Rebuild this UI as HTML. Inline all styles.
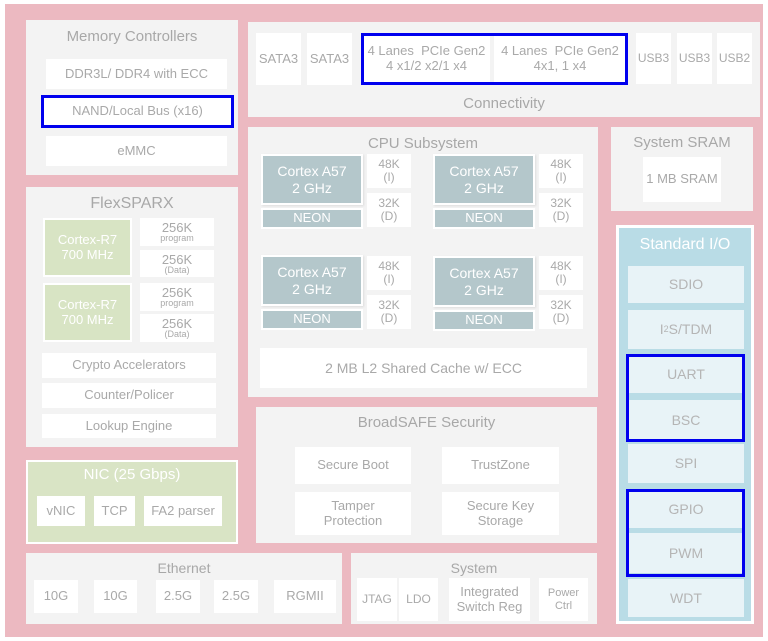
<!DOCTYPE html>
<html><head><meta charset="utf-8"><style>
*{margin:0;padding:0;box-sizing:border-box}
body{width:768px;height:641px;background:#fff;position:relative;overflow:hidden;font-family:"Liberation Sans",sans-serif;color:#a9a9a9}
.a{position:absolute;display:flex;align-items:center;justify-content:center;text-align:center;line-height:1.15}
.p{position:absolute;background:#f3f3f3}
.w{background:#fff}
.t{position:absolute;text-align:center;font-size:15px;color:#a8a8a8}
.c{background:#b4c7cb;color:#fff;font-size:14px;border:2px solid #fff;box-shadow:1px 1px 2px #ddd}
.n{background:#b4c7cb;color:#fff;font-size:13px;border:2px solid #fff}
.k{font-size:12px;line-height:1.1}
.g{background:#d8e4c4;color:#fff;font-size:13px;border:2px solid #fff}
.s{font-size:13px}
.io{background:#e8f3f7;font-size:14px;color:#b5b5b5}
.bl{position:absolute;border:3px solid #0000ee}
.nar{font-size:13px;transform:scaleX(.88)}
</style></head><body>
<div style="position:absolute;left:5px;top:4px;width:758px;height:633px;background:#ecb9c1"></div>

<!-- Memory Controllers -->
<div class="p" style="left:26px;top:20px;width:212px;height:155px"></div>
<div class="t" style="left:26px;top:28px;width:212px">Memory Controllers</div>
<div class="a w s" style="left:46px;top:59px;width:181px;height:30px">DDR3L/ DDR4 with ECC</div>
<div class="a w s" style="left:41px;top:95px;width:193px;height:33px">NAND/Local Bus (x16)</div>
<div class="bl" style="left:41px;top:95px;width:193px;height:33px"></div>
<div class="a w s" style="left:46px;top:136px;width:181px;height:30px">eMMC</div>

<!-- Connectivity -->
<div class="p" style="left:248px;top:22px;width:512px;height:95px"></div>
<div class="a w s" style="left:256px;top:33px;width:45px;height:52px">SATA3</div>
<div class="a w s" style="left:307px;top:33px;width:45px;height:52px">SATA3</div>
<div class="a w s" style="left:363px;top:35px;width:127px;height:48px">4 Lanes&nbsp; PCIe Gen2<br>4 x1/2 x2/1 x4</div>
<div class="a w s" style="left:494px;top:35px;width:132px;height:48px">4 Lanes&nbsp; PCIe Gen2<br>4x1, 1 x4</div>
<div class="bl" style="left:361px;top:33px;width:267px;height:52px"></div>
<div class="a w" style="left:636px;top:33px;width:35px;height:51px;font-size:12px">USB3</div>
<div class="a w" style="left:677px;top:33px;width:35px;height:51px;font-size:12px">USB3</div>
<div class="a w" style="left:717px;top:33px;width:35px;height:51px;font-size:12px">USB2</div>
<div class="t" style="left:248px;top:95px;width:512px">Connectivity</div>

<!-- CPU -->
<div class="p" style="left:248px;top:127px;width:350px;height:270px"></div>
<div class="t" style="left:248px;top:135px;width:350px">CPU Subsystem</div>
<div class="a c" style="left:261px;top:154px;width:102px;height:51px">Cortex A57<br>2 GHz</div>
<div class="a n" style="left:261px;top:208px;width:102px;height:21px">NEON</div>
<div class="a w k" style="left:367px;top:154px;width:44px;height:34px">48K<br>(I)</div>
<div class="a w k" style="left:367px;top:193px;width:44px;height:34px">32K<br>(D)</div>
<div class="a c" style="left:433px;top:154px;width:102px;height:51px">Cortex A57<br>2 GHz</div>
<div class="a n" style="left:433px;top:208px;width:102px;height:21px">NEON</div>
<div class="a w k" style="left:539px;top:154px;width:44px;height:34px">48K<br>(I)</div>
<div class="a w k" style="left:539px;top:193px;width:44px;height:34px">32K<br>(D)</div>
<div class="a c" style="left:261px;top:255px;width:102px;height:51px">Cortex A57<br>2 GHz</div>
<div class="a n" style="left:261px;top:309px;width:102px;height:21px">NEON</div>
<div class="a w k" style="left:367px;top:256px;width:44px;height:34px">48K<br>(I)</div>
<div class="a w k" style="left:367px;top:295px;width:44px;height:34px">32K<br>(D)</div>
<div class="a c" style="left:433px;top:256px;width:102px;height:51px">Cortex A57<br>2 GHz</div>
<div class="a n" style="left:433px;top:310px;width:102px;height:21px">NEON</div>
<div class="a w k" style="left:539px;top:256px;width:44px;height:34px">48K<br>(I)</div>
<div class="a w k" style="left:539px;top:295px;width:44px;height:34px">32K<br>(D)</div>
<div class="a w" style="left:260px;top:348px;width:327px;height:40px;font-size:14px">2 MB L2 Shared Cache w/ ECC</div>

<!-- SRAM -->
<div class="p" style="left:611px;top:127px;width:142px;height:84px"></div>
<div class="t" style="left:611px;top:134px;width:142px">System SRAM</div>
<div class="a w s" style="left:643px;top:157px;width:78px;height:45px">1 MB SRAM</div>

<!-- Standard IO -->
<div style="position:absolute;left:616px;top:225px;width:138px;height:399px;background:#fff"></div>
<div style="position:absolute;left:619px;top:228px;width:132px;height:393px;background:#b9dce6"></div>
<div class="t" style="left:619px;top:236px;width:132px;color:#fff;font-size:16px">Standard I/O</div>
<div class="a io" style="left:628px;top:266px;width:116px;height:37px">SDIO</div>
<div class="a io" style="left:628px;top:310px;width:116px;height:39px">I<sup style="font-size:9px">2</sup>S/TDM</div>
<div class="a io" style="left:628px;top:355px;width:116px;height:38px">UART</div>
<div class="a io" style="left:628px;top:400px;width:116px;height:40px">BSC</div>
<div class="a io" style="left:628px;top:444px;width:116px;height:39px">SPI</div>
<div class="a io" style="left:628px;top:490px;width:116px;height:38px">GPIO</div>
<div class="a io" style="left:628px;top:533px;width:116px;height:40px">PWM</div>
<div class="a io" style="left:628px;top:579px;width:116px;height:38px">WDT</div>
<div class="bl" style="left:626px;top:354px;width:119px;height:88px"></div>
<div class="bl" style="left:626px;top:489px;width:119px;height:88px"></div>

<!-- FlexSPARX -->
<div class="p" style="left:26px;top:187px;width:212px;height:260px"></div>
<div class="t" style="left:26px;top:195px;width:212px;font-size:16px">FlexSPARX</div>
<div class="a g" style="left:43px;top:218px;width:89px;height:59px">Cortex-R7<br>700 MHz</div>
<div class="a g" style="left:43px;top:283px;width:89px;height:59px">Cortex-R7<br>700 MHz</div>
<div class="a w" style="left:140px;top:218px;width:74px;height:28px;flex-direction:column;font-size:13px;line-height:1"><span>256K</span><span style="font-size:9px">program</span></div>
<div class="a w" style="left:140px;top:250px;width:74px;height:27px;flex-direction:column;font-size:13px;line-height:1"><span>256K</span><span style="font-size:9px">(Data)</span></div>
<div class="a w" style="left:140px;top:283px;width:74px;height:28px;flex-direction:column;font-size:13px;line-height:1"><span>256K</span><span style="font-size:9px">program</span></div>
<div class="a w" style="left:140px;top:314px;width:74px;height:28px;flex-direction:column;font-size:13px;line-height:1"><span>256K</span><span style="font-size:9px">(Data)</span></div>
<div class="a w s" style="left:42px;top:353px;width:174px;height:25px">Crypto Accelerators</div>
<div class="a w s" style="left:42px;top:383px;width:174px;height:25px">Counter/Policer</div>
<div class="a w s" style="left:42px;top:414px;width:174px;height:24px">Lookup Engine</div>

<!-- NIC -->
<div style="position:absolute;left:26px;top:460px;width:212px;height:84px;background:#d9e4c5;border:2px solid #fff"></div>
<div class="t" style="left:26px;top:466px;width:212px;color:#fff">NIC (25 Gbps)</div>
<div class="a w s" style="left:37px;top:496px;width:48px;height:30px">vNIC</div>
<div class="a w s" style="left:94px;top:496px;width:41px;height:30px">TCP</div>
<div class="a w s" style="left:144px;top:496px;width:78px;height:30px">FA2 parser</div>

<!-- BroadSAFE -->
<div class="p" style="left:256px;top:407px;width:341px;height:136px"></div>
<div class="t" style="left:256px;top:414px;width:341px">BroadSAFE Security</div>
<div class="a w s" style="left:295px;top:447px;width:116px;height:37px">Secure Boot</div>
<div class="a w s" style="left:442px;top:447px;width:117px;height:37px">TrustZone</div>
<div class="a w s" style="left:295px;top:492px;width:116px;height:43px">Tamper<br>Protection</div>
<div class="a w s" style="left:442px;top:492px;width:117px;height:43px">Secure Key<br>Storage</div>

<!-- Ethernet -->
<div class="p" style="left:26px;top:553px;width:316px;height:71px"></div>
<div class="t" style="left:26px;top:560px;width:316px;font-size:14px">Ethernet</div>
<div class="a w s" style="left:34px;top:580px;width:44px;height:33px">10G</div>
<div class="a w s" style="left:94px;top:580px;width:43px;height:33px">10G</div>
<div class="a w s" style="left:156px;top:580px;width:44px;height:33px">2.5G</div>
<div class="a w s" style="left:214px;top:580px;width:44px;height:33px">2.5G</div>
<div class="a w s" style="left:274px;top:580px;width:62px;height:33px">RGMII</div>

<!-- System -->
<div class="p" style="left:351px;top:553px;width:246px;height:71px"></div>
<div class="t" style="left:351px;top:560px;width:246px;font-size:14px">System</div>
<div class="a w" style="left:357px;top:578px;width:40px;height:43px;font-size:12px">JTAG</div>
<div class="a w" style="left:399px;top:578px;width:39px;height:43px;font-size:12px">LDO</div>
<div class="a w s" style="left:449px;top:578px;width:81px;height:43px">Integrated<br>Switch Reg</div>
<div class="a w" style="left:539px;top:578px;width:49px;height:43px;font-size:11px">Power<br>Ctrl</div>
</body></html>
